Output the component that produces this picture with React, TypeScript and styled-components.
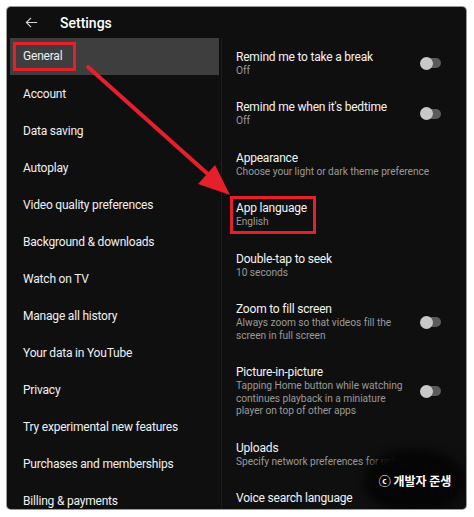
import React from 'react'
import styled, { createGlobalStyle } from 'styled-components'

const GlobalStyle = createGlobalStyle`
  html, body {
    margin: 0;
    padding: 0;
    background: #ffffff;
  }
  * {
    box-sizing: border-box;
  }
`

const leftItems = [
  'General',
  'Account',
  'Data saving',
  'Autoplay',
  'Video quality preferences',
  'Background & downloads',
  'Watch on TV',
  'Manage all history',
  'Your data in YouTube',
  'Privacy',
  'Try experimental new features',
  'Purchases and memberships',
  'Billing & payments',
]

type Setting = {
  title: string
  sub?: string
  toggle?: boolean
  marked?: boolean
}

const settings: Setting[] = [
  { title: 'Remind me to take a break', sub: 'Off', toggle: true },
  { title: "Remind me when it's bedtime", sub: 'Off', toggle: true },
  { title: 'Appearance', sub: 'Choose your light or dark theme preference' },
  { title: 'App language', sub: 'English', marked: true },
  { title: 'Double-tap to seek', sub: '10 seconds' },
  {
    title: 'Zoom to fill screen',
    sub: 'Always zoom so that videos fill the screen in full screen',
    toggle: true,
  },
  {
    title: 'Picture-in-picture',
    sub: 'Tapping Home button while watching continues playback in a miniature player on top of other apps',
    toggle: true,
  },
  { title: 'Uploads', sub: 'Specify network preferences for uploads' },
  { title: 'Voice search language' },
]

const App = () => {
  return (
    <Frame>
      <GlobalStyle />
      <Screen>
        <Header>
          <BackArrow viewBox="0 0 16 16">
            <path d="M14 8H2.5M7.5 3L2.5 8l5 5" />
          </BackArrow>
          <Title>Settings</Title>
        </Header>
        <Body>
          <LeftPanel>
            {leftItems.map((item, i) => (
              <LeftItem key={item} $selected={i === 0}>
                {i === 0 ? <GeneralMark>{item}</GeneralMark> : item}
              </LeftItem>
            ))}
          </LeftPanel>
          <RightPanel>
            {settings.map((s) => {
              const text = (
                <>
                  <ItemTitle>{s.title}</ItemTitle>
                  {s.sub && <ItemSub>{s.sub}</ItemSub>}
                </>
              )
              return (
                <Item key={s.title}>
                  {s.marked ? (
                    <LanguageMark>{text}</LanguageMark>
                  ) : (
                    <ItemText $narrow={!!s.toggle}>{text}</ItemText>
                  )}
                  {s.toggle && (
                    <Toggle>
                      <Knob />
                    </Toggle>
                  )}
                </Item>
              )
            })}
          </RightPanel>
        </Body>

        <Annotation viewBox="0 0 459 502">
          <line x1="81" y1="60" x2="203" y2="169" stroke="#e5202b" strokeWidth="4" strokeLinecap="round" />
          <polygon points="223,188 191,177 208,158" fill="#e5202b" />
        </Annotation>

        <Watermark>
          <Blob />
          <MarkText>ⓒ 개발자 준생</MarkText>
        </Watermark>
      </Screen>
    </Frame>
  )
}

export default App

const Frame = styled.div`
  width: 474px;
  height: 517px;
  padding: 7px 8px 8px 7px;
  background: #ffffff;
`

const Screen = styled.div`
  position: relative;
  display: flex;
  flex-direction: column;
  width: 459px;
  height: 502px;
  background: #0f0f0f;
  border-radius: 4px;
  overflow: hidden;
  box-shadow: 0 0 0 1px #9a9a9a;
  font-family: Roboto, 'Noto Sans', sans-serif;
`

const Header = styled.div`
  display: flex;
  align-items: center;
  height: 31px;
  padding-left: 17px;
  flex-shrink: 0;
`

const BackArrow = styled.svg`
  width: 15px;
  height: 15px;
  fill: none;
  stroke: #d8d8d8;
  stroke-width: 1.2;
`

const Title = styled.div`
  margin-left: 21px;
  color: #ffffff;
  font-size: 14px;
  font-weight: 500;
`

const Body = styled.div`
  display: flex;
  flex: 1;
  min-height: 0;
`

const LeftPanel = styled.div`
  width: 215px;
  flex-shrink: 0;
  border-right: 1px solid #1d1d1d;
`

const LeftItem = styled.div<{ $selected?: boolean }>`
  display: flex;
  align-items: center;
  height: 37px;
  margin: ${({ $selected }) => ($selected ? '0 2px 0 3px' : '0')};
  padding-left: ${({ $selected }) => ($selected ? '13px' : '16px')};
  background: ${({ $selected }) => ($selected ? '#3e3e3e' : 'transparent')};
  color: #f1f1f1;
  font-size: 12px;
  letter-spacing: -0.2px;
  white-space: nowrap;
`

const GeneralMark = styled.span`
  display: inline-block;
  margin: -7px 0 -7px -10px;
  padding: 4px 11px 4px 7px;
  border: 3px solid #e5202b;
  line-height: 15px;
`

const RightPanel = styled.div`
  flex: 1;
  padding: 0 0 0 14px;
`

const Item = styled.div`
  display: flex;
  align-items: center;
  justify-content: space-between;
  padding: 11.5px 24px 11.5px 0;
`

const ItemText = styled.div<{ $narrow?: boolean }>`
  max-width: ${({ $narrow }) => ($narrow ? '170px' : 'none')};
`

const LanguageMark = styled.div`
  margin: -5px 0 -5px -6px;
  padding: 2px 6px 2px 3px;
  border: 3px solid #e5202b;
`

const ItemTitle = styled.div`
  color: #f4f4f4;
  font-size: 12px;
  letter-spacing: -0.2px;
  line-height: 15px;
`

const ItemSub = styled.div`
  color: #9a9a9a;
  font-size: 10.2px;
  letter-spacing: -0.05px;
  line-height: 12.5px;
`

const Toggle = styled.div`
  position: relative;
  width: 20px;
  height: 10px;
  margin-right: 1px;
  border-radius: 5px;
  background: #5b5b5b;
  flex-shrink: 0;
`

const Knob = styled.div`
  position: absolute;
  top: -1.5px;
  left: -1px;
  width: 13px;
  height: 13px;
  border-radius: 50%;
  background: #c9c9c9;
`

const Annotation = styled.svg`
  position: absolute;
  top: 0;
  left: 0;
  width: 459px;
  height: 502px;
  pointer-events: none;
`

const Watermark = styled.div`
  position: absolute;
  right: 6px;
  bottom: 6px;
  width: 90px;
  height: 46px;
  display: flex;
  align-items: center;
  justify-content: center;
`

const Blob = styled.div`
  position: absolute;
  inset: -8px -6px -10px -6px;
  border-radius: 50%;
  background: #050505;
  filter: blur(5px);
`

const MarkText = styled.div`
  position: relative;
  color: #ffffff;
  font-family: 'Noto Sans CJK KR', 'Noto Sans', sans-serif;
  font-size: 12px;
  font-weight: 700;
  white-space: nowrap;
`
